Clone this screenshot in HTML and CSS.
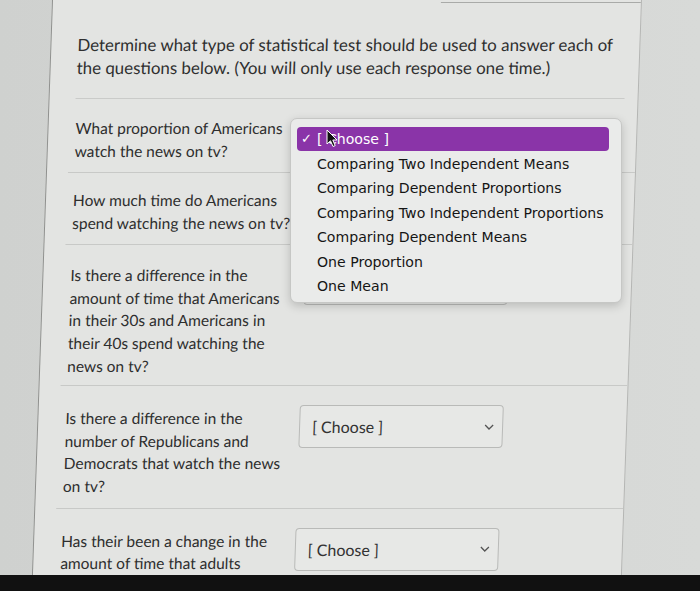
FILE: index.html
```html
<!DOCTYPE html>
<html>
<head>
<meta charset="utf-8">
<link rel="stylesheet" href="styles.css">
</head>
<body>
<div class="screen">
  <div class="card">
    <div class="topline"></div>
    <div class="content">
      <p class="prompt">Determine what type of statistical test should be used to answer each of the questions below. (You will only use each response one time.)</p>
      <div class="rows">
        <div class="row r1">
          <div class="q">What proportion of Americans watch the news on tv?</div>
          <div class="select"><span>[ Choose ]</span><svg class="chev" viewBox="0 0 10 6" width="10" height="6"><path d="M1 1 L5 5 L9 1" fill="none" stroke="#555" stroke-width="1.3"/></svg></div>
        </div>
        <div class="row r2">
          <div class="q">How much time do Americans spend watching the news on tv?</div>
          <div class="select"><span>[ Choose ]</span><svg class="chev" viewBox="0 0 10 6" width="10" height="6"><path d="M1 1 L5 5 L9 1" fill="none" stroke="#555" stroke-width="1.3"/></svg></div>
        </div>
        <div class="row r3">
          <div class="q">Is there a difference in the amount of time that Americans in their 30s and Americans in their 40s spend watching the news on tv?</div>
          <div class="select"><span>[ Choose ]</span><svg class="chev" viewBox="0 0 10 6" width="10" height="6"><path d="M1 1 L5 5 L9 1" fill="none" stroke="#555" stroke-width="1.3"/></svg></div>
        </div>
        <div class="row r4">
          <div class="q">Is there a difference in the number of Republicans and Democrats that watch the news on tv?</div>
          <div class="select"><span>[ Choose ]</span><svg class="chev" viewBox="0 0 10 6" width="10" height="6"><path d="M1 1 L5 5 L9 1" fill="none" stroke="#555" stroke-width="1.3"/></svg></div>
        </div>
        <div class="row r5">
          <div class="q">Has their been a change in the amount of time that adults</div>
          <div class="select"><span>[ Choose ]</span><svg class="chev" viewBox="0 0 10 6" width="10" height="6"><path d="M1 1 L5 5 L9 1" fill="none" stroke="#555" stroke-width="1.3"/></svg></div>
        </div>
      </div>
    </div>
  </div>
  <div class="bezel"></div>

  <div class="menu">
    <div class="opt selected"><span class="check">✓</span>[ Choose ]</div>
    <div class="opt">Comparing Two Independent Means</div>
    <div class="opt">Comparing Dependent Proportions</div>
    <div class="opt">Comparing Two Independent Proportions</div>
    <div class="opt">Comparing Dependent Means</div>
    <div class="opt">One Proportion</div>
    <div class="opt">One Mean</div>
    <svg class="cursor" viewBox="0 0 12 19" width="12" height="19"><path d="M1 1 L1 15 L4.5 11.8 L7 17.5 L9.2 16.6 L6.8 11 L11 11 Z" fill="#111" stroke="#fff" stroke-width="1"/></svg>
  </div>
</div>
</body>
</html>
```

FILE: styles.css
```css
html, body {
  margin: 0;
  padding: 0;
  height: 591px;
  overflow: hidden;
  background: #d4d6d4;
}

.screen {
  position: relative;
  width: 700px;
  height: 591px;
  display: flex;
  flex-direction: column;
  background: linear-gradient(90deg, #cfd1cf 0%, #d8dad8 100%);
}

.card {
  margin-left: 52px;
  width: 590px;
  height: 575px;
  box-sizing: border-box;
  background: #e3e4e2;
  border-left: 1px solid #8f908e;
  border-right: 1px solid #b4b5b3;
  overflow: hidden;
  transform: skewX(-2deg);
  transform-origin: 0 0;
  flex: none;
}

.topline {
  height: 2px;
  margin-left: 388px;
  border-bottom: 1px solid #a9aaa8;
}

.content {
  padding: 0 13px 0 26px;
}

.prompt {
  margin: 0;
  padding: 30px 0 0 0;
  height: 65px;
  width: 549px;
  font-family: Lato, "Noto Sans", sans-serif;
  font-size: 16.9px;
  line-height: 23px;
  color: #2f2f2f;
  border-bottom: 1px solid #cacbc9;
}

.rows {
  margin-left: -5px;
  margin-right: -13px;
}

.row {
  display: flex;
  gap: 13px;
  align-items: flex-start;
  padding: 18px 0 10px 6px;
  border-bottom: 1px solid #c8c9c7;
}

.row.r1 { padding-bottom: 8px; }
.row.r2 { padding-top: 16px; }
.row.r3 { padding-top: 19px; padding-bottom: 8px; }
.row.r4 { padding-top: 21px; }
.row.r5 { padding-top: 21px; padding-bottom: 0; border-bottom: none; }

.q {
  width: 221px;
  flex: none;
  font-family: Lato, "Noto Sans", sans-serif;
  font-size: 15.5px;
  line-height: 22.6px;
  color: #2e2e2e;
}

.select {
  width: 204px;
  height: 43px;
  margin-top: -2px;
  box-sizing: border-box;
  border: 1px solid #b9bab8;
  border-radius: 4px;
  background: #e7e8e6;
  display: flex;
  align-items: center;
  justify-content: space-between;
  padding: 0 8px 0 12px;
  font-family: Lato, "Noto Sans", sans-serif;
  font-size: 16px;
  color: #333;
}

.row.r1 .select {
  margin-top: 4px;
}

.bezel {
  flex: 1;
  background: #111;
}

.menu {
  position: absolute;
  left: 290px;
  top: 118px;
  width: 332px;
  height: 185px;
  box-sizing: border-box;
  padding: 8px 12px 6px 6px;
  background: #eaebea;
  border: 1px solid #c6c7c5;
  border-radius: 7px;
  box-shadow: 0 3px 10px rgba(0, 0, 0, 0.18);
  font-family: "DejaVu Sans", Verdana, sans-serif;
  font-size: 14.1px;
  color: #151515;
}

.opt {
  height: 24.5px;
  line-height: 24.5px;
  padding-left: 20px;
  white-space: nowrap;
}

.opt.selected {
  position: relative;
  background: #8a34a8;
  color: #fff;
  border-radius: 4px;
  height: 24px;
  line-height: 24px;
  margin-bottom: 0.5px;
}

.check {
  position: absolute;
  left: 4px;
  top: 0;
  font-size: 13px;
}

.cursor {
  position: absolute;
  left: 35px;
  top: 10px;
}
```
